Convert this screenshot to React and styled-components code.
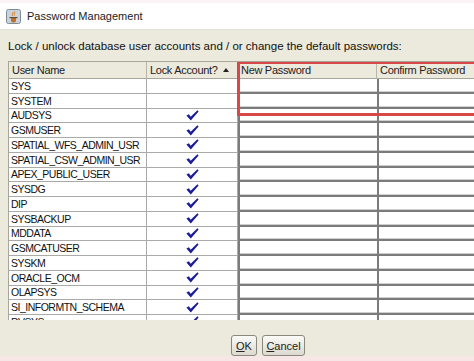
import React from "react";
import styled, { createGlobalStyle } from "styled-components";

const GlobalStyle = createGlobalStyle`
  html, body {
    margin: 0;
    padding: 0;
    background: #ece9dd;
  }
  body {
    font-family: "Liberation Sans", Arial, sans-serif;
  }
`;

const Window = styled.div`
  width: 474px;
  height: 361px;
  display: flex;
  flex-direction: column;
  overflow: hidden;
  background: #ece9dd;
`;

const Strip = styled.div`
  height: ${(p) => p.h}px;
  flex: none;
  background: ${(p) => p.bg};
`;

const TitleBar = styled.div`
  height: 26px;
  flex: none;
  display: flex;
  align-items: center;
  gap: 6px;
  padding-left: 6px;
  background: #ffffff;
  border-bottom: 1px solid #e4e0d6;
  font-size: 11px;
  color: #222;
`;

const Body = styled.div`
  flex: 1;
  display: flex;
  flex-direction: column;
  padding-left: 8px;
  min-height: 0;
`;

const Intro = styled.div`
  height: 32px;
  display: flex;
  align-items: center;
  font-size: 11.5px;
  color: #111;
`;

const TableWrap = styled.div`
  position: relative;
  height: 258px;
  flex: none;
  overflow: hidden;
  border-top: 1px solid #a8a59a;
  border-left: 1px solid #a8a59a;
`;

const Grid = styled.div`
  display: grid;
  grid-template-columns: 138px 91px 139px 140px;
  grid-template-rows: 17px;
  grid-auto-rows: 14.75px;
  width: 508px;
  background: #fff;
`;

const HeadCell = styled.div`
  box-sizing: border-box;
  display: flex;
  align-items: center;
  justify-content: space-between;
  padding: 0 3px;
  background: #ece9dd;
  border-right: 1px solid #b8b5aa;
  border-bottom: 1px solid #a8a59a;
  font-size: 11px;
  color: #222;
  letter-spacing: -0.3px;
  white-space: nowrap;
`;

const SortArrow = styled.span`
  width: 0;
  height: 0;
  margin-right: 5px;
  border-left: 3.5px solid transparent;
  border-right: 3.5px solid transparent;
  border-bottom: 4px solid #222;
`;

const Cell = styled.div`
  box-sizing: border-box;
  display: flex;
  align-items: center;
  justify-content: ${(p) => (p.center ? "center" : "flex-start")};
  padding: 0 2px;
  background: #fff;
  border-right: 1px solid #aaa;
  border-bottom: 1px solid #aaa;
  font-size: 10.5px;
  letter-spacing: -0.5px;
  color: #111;
  white-space: nowrap;
`;

const Field = styled.div`
  box-sizing: border-box;
  background: #fff;
  border-left: 2px solid #7b7b7b;
  border-bottom: 2px solid #7b7b7b;
  box-shadow: inset 0 -1px 0 #cfcfcf;
`;

const Highlight = styled.div`
  position: absolute;
  left: 228px;
  top: -1px;
  width: 300px;
  height: 55px;
  box-sizing: border-box;
  border: 3px solid #d84848;
  pointer-events: none;
`;

const Buttons = styled.div`
  display: flex;
  gap: 5px;
  padding: 15px 0 0 223px;
`;

const Button = styled.button`
  height: 21px;
  width: ${(p) => p.w}px;
  padding: 0;
  border: 1px solid #8a877e;
  border-radius: 3px;
  background: linear-gradient(#fbfbf8, #dcd9cf);
  font-family: "Liberation Sans", Arial, sans-serif;
  font-size: 11px;
  color: #222;
  u {
    text-decoration: underline;
  }
`;

const users = [
  ["SYS", false],
  ["SYSTEM", false],
  ["AUDSYS", true],
  ["GSMUSER", true],
  ["SPATIAL_WFS_ADMIN_USR", true],
  ["SPATIAL_CSW_ADMIN_USR", true],
  ["APEX_PUBLIC_USER", true],
  ["SYSDG", true],
  ["DIP", true],
  ["SYSBACKUP", true],
  ["MDDATA", true],
  ["GSMCATUSER", true],
  ["SYSKM", true],
  ["ORACLE_OCM", true],
  ["OLAPSYS", true],
  ["SI_INFORMTN_SCHEMA", true],
  ["DVSYS", true],
];

function AppIcon() {
  return (
    <svg width="15" height="15" viewBox="0 0 15 15">
      <rect x="0.5" y="0.5" width="14" height="14" rx="2" fill="#c9d3dd" stroke="#7d8b99" />
      <path d="M5 9h5v2.5a2 2 0 0 1-2 2H7a2 2 0 0 1-2-2z" fill="#c0702a" />
      <path d="M6.5 3c1 1-1 2 0 4M8.5 2.5c1 1-1 2 0 4" stroke="#d9822b" strokeWidth="1" fill="none" />
      <rect x="3.5" y="8" width="8" height="1.2" fill="#6a4a2a" />
    </svg>
  );
}

function Check() {
  return (
    <svg width="13" height="11" viewBox="0 0 13 11">
      <path d="M0.4 5.6 L2.9 4.2 L4.7 6.8 L11.4 0.3 L12.6 1.5 L4.8 10.4 Z" fill="#1a1d9a" />
    </svg>
  );
}

export default function App() {
  return (
    <>
      <GlobalStyle />
      <Window>
        <Strip h={3} bg="#fbf3f5" />
        <TitleBar>
          <AppIcon />
          Password Management
        </TitleBar>
        <Body>
          <Intro>Lock / unlock database user accounts and / or change the default passwords:</Intro>
          <TableWrap>
            <Grid>
              <HeadCell>User Name</HeadCell>
              <HeadCell>
                Lock Account?
                <SortArrow />
              </HeadCell>
              <HeadCell>New Password</HeadCell>
              <HeadCell>Confirm Password</HeadCell>
              {users.map(([name, locked]) => (
                <React.Fragment key={name}>
                  <Cell>{name}</Cell>
                  <Cell center>{locked && <Check />}</Cell>
                  <Field />
                  <Field />
                </React.Fragment>
              ))}
            </Grid>
            <Highlight />
          </TableWrap>
          <Buttons>
            <Button w={26}>
              <u>O</u>K
            </Button>
            <Button w={43}>
              <u>C</u>ancel
            </Button>
          </Buttons>
        </Body>
        <Strip h={5} bg="#f7e6e6" />
      </Window>
    </>
  );
}
